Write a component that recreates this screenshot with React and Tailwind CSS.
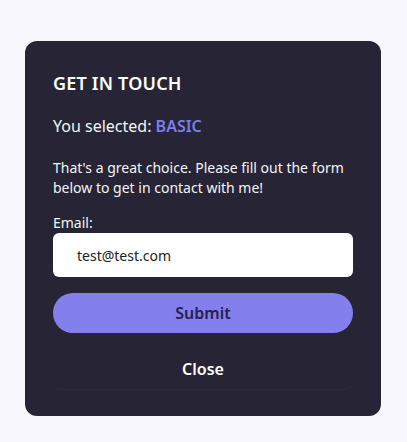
export default function App() {
    return (
        <div className="min-h-[442px] bg-[#f8f7fd] pt-[41px] pl-[25px]" style={{ fontFamily: '"Noto Sans", "Open Sans", sans-serif' }}>
            <div className="w-[356px] h-[375px] rounded-xl bg-[#272535] px-7 pt-[30px] text-white">
                <h2 className="text-[18px] leading-6 font-semibold tracking-[0.2px]">GET IN TOUCH</h2>
                <p className="mt-[19px] text-[16px] leading-6 text-gray-100">
                    You selected: <span className="font-semibold text-[#7f7ce6]">BASIC</span>
                </p>
                <p className="mt-[20px] text-[14px] leading-5 text-gray-100">
                    That's a great choice. Please fill out the form below to get in contact with me!
                </p>
                <form className="mt-[15px] flex flex-col">
                    <label className="text-[14px] leading-5 text-gray-100">Email:</label>
                    <input
                        type="email"
                        defaultValue="test@test.com"
                        className="h-[44px] w-full rounded-md bg-white px-6 text-[14px] text-[#222] outline-none"
                    />
                    <button type="button" className="mt-4 h-10 w-full rounded-full bg-[#8380ee] text-[16px] font-semibold text-[#26224a]">
                        Submit
                    </button>
                    <button type="button" className="mt-4 h-10 w-full rounded-lg text-[16px] font-semibold text-white shadow-[0_1px_0_rgba(255,255,255,0.03)]">
                        Close
                    </button>
                </form>
            </div>
        </div>
    );
}
